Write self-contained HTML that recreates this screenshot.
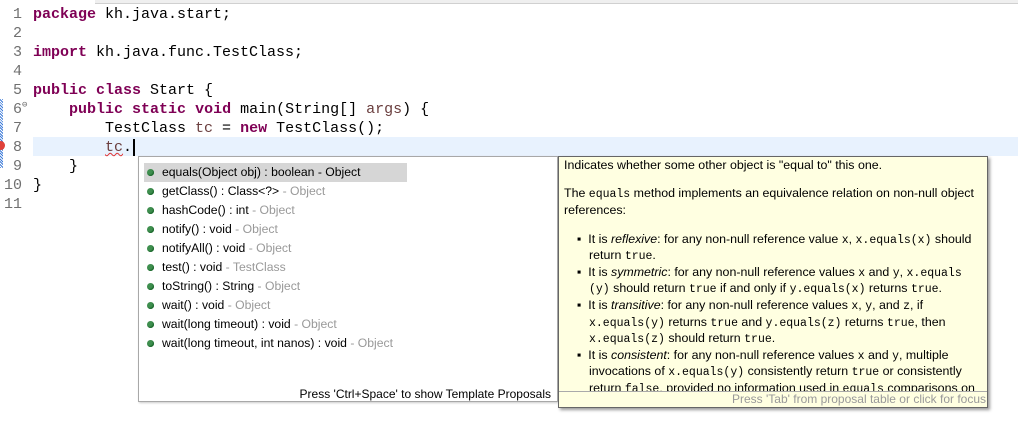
<!DOCTYPE html>
<html><head><meta charset="utf-8"><style>
*{margin:0;padding:0;box-sizing:border-box}
body{width:1018px;height:446px;background:#fff;position:relative;overflow:hidden;font-family:"Liberation Mono",monospace}
.topbar{position:absolute;left:95px;top:0;width:923px;height:4px;background:#efefef;border-bottom:1px solid #d0d0d0}
.hl{position:absolute;left:33px;top:137px;width:985px;height:19px;background:#e8f2fe}
.ln{position:absolute;left:0;width:22px;text-align:right;font-size:15px;color:#707070;line-height:19px}
.code{position:absolute;left:33px;font-size:15px;line-height:19px;white-space:pre;color:#000}
.k{color:#7f0055;font-weight:bold}
.v{color:#6a3e3e}
.bar{position:absolute;left:0;top:99px;width:3px;height:69px;background:repeating-linear-gradient(45deg,#3d7bd9 0 1px,#fff 1px 2px)}
.bp{position:absolute;left:-3px;top:141px;width:8px;height:9px;border-radius:50%;background:#e0413a}
.sans{font-family:"Liberation Sans","Noto Sans CJK KR",sans-serif}
.list{position:absolute;left:138px;top:156px;width:420px;height:246px;background:#fff;border:1px solid #a8a8a8;box-shadow:1px 1px 2px #ccc}
.item{position:absolute;left:5px;height:19px;font-size:12.2px;line-height:19px;white-space:nowrap;padding-left:18px}
.item::before{content:"";position:absolute;left:3px;top:6px;width:7px;height:7px;border-radius:50%;background:#3f8f4f;box-shadow:inset -1px -1px 1px #1f6a2f}
.g{color:#999}
.sel{background:#d6d6d6;width:263px}
.doc{position:absolute;left:558px;top:156px;width:430px;height:252px;background:#ffffe1;border:1px solid #666;box-shadow:2px 2px 3px #999;font-size:12.4px;color:#000;overflow:hidden}
.doc p{position:absolute;left:5px;line-height:17px;white-space:nowrap}
.m{font-family:"Liberation Mono",monospace;font-size:11.5px}
.foot{position:absolute;left:0;top:234px;width:100%;height:17px;background:#ffffe1;border-top:1px solid #aaa;text-align:right;color:#999;font-size:12px;line-height:15px;padding-right:1px}
</style></head><body>
<div class="topbar"></div>
<div class="hl"></div>
<div class="bar"></div><div class="bp"></div>
<div class="ln" style="top:5px">1</div>
<div class="ln" style="top:24px">2</div>
<div class="ln" style="top:43px">3</div>
<div class="ln" style="top:62px">4</div>
<div class="ln" style="top:81px">5</div>
<div class="ln" style="top:100px">6<span style="font-size:9px;position:absolute;left:22px;top:-4px">⊖</span></div>
<div class="ln" style="top:119px">7</div>
<div class="ln" style="top:138px">8</div>
<div class="ln" style="top:157px">9</div>
<div class="ln" style="top:176px">10</div>
<div class="ln" style="top:195px">11</div>
<div class="code" style="top:5px"><span class="k">package</span> kh.java.start;</div>
<div class="code" style="top:43px"><span class="k">import</span> kh.java.func.TestClass;</div>
<div class="code" style="top:81px"><span class="k">public</span> <span class="k">class</span> Start {</div>
<div class="code" style="top:100px">    <span class="k">public</span> <span class="k">static</span> <span class="k">void</span> main(String[] <span class="v">args</span>) {</div>
<div class="code" style="top:119px">        TestClass <span class="v">tc</span> = <span class="k">new</span> TestClass();</div>
<div class="code" style="top:138px">        <span class="v" style="text-decoration:underline wavy #e03030;text-decoration-thickness:1px">tc</span>.<span style="border-left:2px solid #000;margin-left:1px"></span></div>
<div class="code" style="top:157px">    }</div>
<div class="code" style="top:176px">}</div>
<div class="list sans">
<div class="item sel" style="top:6px">equals(Object obj) : boolean - Object</div>
<div class="item" style="top:25px">getClass() : Class&lt;?&gt; <span class="g">- Object</span></div>
<div class="item" style="top:44px">hashCode() : int <span class="g">- Object</span></div>
<div class="item" style="top:63px">notify() : void <span class="g">- Object</span></div>
<div class="item" style="top:82px">notifyAll() : void <span class="g">- Object</span></div>
<div class="item" style="top:101px">test() : void <span class="g">- TestClass</span></div>
<div class="item" style="top:120px">toString() : String <span class="g">- Object</span></div>
<div class="item" style="top:139px">wait() : void <span class="g">- Object</span></div>
<div class="item" style="top:158px">wait(long timeout) : void <span class="g">- Object</span></div>
<div class="item" style="top:177px">wait(long timeout, int nanos) : void <span class="g">- Object</span></div>
<div style="position:absolute;right:6px;top:229px;font-size:12px;line-height:16px">Press 'Ctrl+Space' to show Template Proposals</div>
</div>
<div class="doc sans">
<p style="top:0px">Indicates whether some other object is "equal to" this one.</p>
<p style="top:28px">The <span class="m">equals</span> method implements an equivalence relation on non-null object</p>
<p style="top:45px">references:</p>
<p style="top:74px;left:18px">▪&nbsp;&nbsp;It is <i>reflexive</i>: for any non-null reference value <span class="m">x</span>, <span class="m">x.equals(x)</span> should</p>
<p style="top:90px;left:30px">return <span class="m">true</span>.</p>
<p style="top:107px;left:18px">▪&nbsp;&nbsp;It is <i>symmetric</i>: for any non-null reference values <span class="m">x</span> and <span class="m">y</span>, <span class="m">x.equals</span></p>
<p style="top:123px;left:30px"><span class="m">(y)</span> should return <span class="m">true</span> if and only if <span class="m">y.equals(x)</span> returns <span class="m">true</span>.</p>
<p style="top:140px;left:18px">▪&nbsp;&nbsp;It is <i>transitive</i>: for any non-null reference values <span class="m">x</span>, <span class="m">y</span>, and <span class="m">z</span>, if</p>
<p style="top:157px;left:30px"><span class="m">x.equals(y)</span> returns <span class="m">true</span> and <span class="m">y.equals(z)</span> returns <span class="m">true</span>, then</p>
<p style="top:173px;left:30px"><span class="m">x.equals(z)</span> should return <span class="m">true</span>.</p>
<p style="top:190px;left:18px">▪&nbsp;&nbsp;It is <i>consistent</i>: for any non-null reference values <span class="m">x</span> and <span class="m">y</span>, multiple</p>
<p style="top:206px;left:30px">invocations of <span class="m">x.equals(y)</span> consistently return <span class="m">true</span> or consistently</p>
<p style="top:223px;left:30px">return <span class="m">false</span>, provided no information used in <span class="m">equals</span> comparisons on</p>
<div class="foot">Press 'Tab' from proposal table or click for focus</div>
</div>
</body></html>
